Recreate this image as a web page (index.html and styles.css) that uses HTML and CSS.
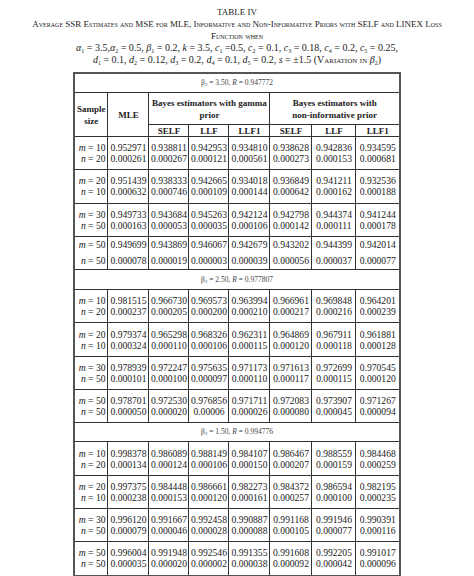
FILE: index.html
```html
<!DOCTYPE html>
<html>
<head>
<meta charset="utf-8">
<link rel="stylesheet" href="styles.css">
</head>
<body>
<div class="page">
  <div class="caption">
    <div class="cap-title">TABLE IV</div>
    <div class="cap-sc">Average SSR Estimates and MSE for MLE, Informative and Non-Informative Priors with SELF and LINEX Loss<br>Function when</div>
    <div class="cap-math"><i>α</i><sub>1</sub> = 3.5,<i>α</i><sub>2</sub> = 0.5, <i>β</i><sub>1</sub> = 0.2, <i>k</i> = 3.5, <i>c</i><sub>1</sub> =0.5, <i>c</i><sub>2</sub> = 0.1, <i>c</i><sub>3</sub> = 0.18, <i>c</i><sub>4</sub> = 0.2, <i>c</i><sub>5</sub> = 0.25,</div>
    <div class="cap-math"><i>d</i><sub>1</sub> = 0.1, <i>d</i><sub>2</sub> = 0.12, <i>d</i><sub>3</sub> = 0.2, <i>d</i><sub>4</sub> = 0.1, <i>d</i><sub>5</sub> = 0.2, <i>s</i> = ±1.5 <span class="sc">(Variation in</span> <i>β</i><sub>2</sub>)</div>
  </div>
  <table class="data">
    <colgroup>
      <col class="w34"><col class="w41"><col class="w40"><col class="w40"><col class="w41"><col class="w42"><col class="w44"><col class="w44">
    </colgroup>
    <tr class="beta-row"><td colspan="8"><span class="bsym">β<sub>2</sub></span> = 3.50, <i>R</i> = 0.947772</td></tr>
    <tr class="head1">
      <th rowspan="2" class="h-sample">Sample<br>size</th>
      <th rowspan="2">MLE</th>
      <th colspan="3">Bayes estimators with gamma<br>prior</th>
      <th colspan="3">Bayes estimators with<br>non-informative prior</th>
    </tr>
    <tr class="head2"><th>SELF</th><th>LLF</th><th>LLF1</th><th>SELF</th><th>LLF</th><th>LLF1</th></tr>

    <tr class="grp"><td class="lbl"><i>m</i> = 10<br><i>n</i> = 20</td><td>0.952971<br>0.000261</td><td>0.938811<br>0.000267</td><td>0.942953<br>0.000121</td><td>0.934810<br>0.000561</td><td>0.938628<br>0.000273</td><td>0.942836<br>0.000153</td><td>0.934595<br>0.000681</td></tr>
    <tr class="grp"><td class="lbl"><i>m</i> = 20<br><i>n</i> = 10</td><td>0.951439<br>0.000632</td><td>0.938333<br>0.000746</td><td>0.942665<br>0.000109</td><td>0.934018<br>0.000144</td><td>0.936849<br>0.000642</td><td>0.941211<br>0.000162</td><td>0.932536<br>0.000188</td></tr>
    <tr class="grp"><td class="lbl"><i>m</i> = 30<br><i>n</i> = 50</td><td>0.949733<br>0.000163</td><td>0.943684<br>0.000053</td><td>0.945263<br>0.000035</td><td>0.942124<br>0.000106</td><td>0.942798<br>0.000142</td><td>0.944374<br>0.000111</td><td>0.941244<br>0.000178</td></tr>
    <tr class="grp wide"><td class="lbl"><i>m</i> = 50<br><i>n</i> = 50</td><td>0.949699<br>0.000078</td><td>0.943869<br>0.000019</td><td>0.946067<br>0.000003</td><td>0.942679<br>0.000039</td><td>0.943202<br>0.000056</td><td>0.944399<br>0.000037</td><td>0.942014<br>0.000077</td></tr>

    <tr class="beta-row b2"><td colspan="8"><span class="bsym">β<sub>2</sub></span> = 2.50, <i>R</i> = 0.977807</td></tr>
    <tr class="grp"><td class="lbl"><i>m</i> = 10<br><i>n</i> = 20</td><td>0.981515<br>0.000237</td><td>0.966730<br>0.000205</td><td>0.969573<br>0.000200</td><td>0.963994<br>0.000210</td><td>0.966961<br>0.000217</td><td>0.969848<br>0.000216</td><td>0.964201<br>0.000239</td></tr>
    <tr class="grp"><td class="lbl"><i>m</i> = 20<br><i>n</i> = 10</td><td>0.979374<br>0.000324</td><td>0.965298<br>0.000110</td><td>0.968326<br>0.000106</td><td>0.962311<br>0.000115</td><td>0.964869<br>0.000120</td><td>0.967911<br>0.000118</td><td>0.961881<br>0.000128</td></tr>
    <tr class="grp"><td class="lbl"><i>m</i> = 30<br><i>n</i> = 50</td><td>0.978939<br>0.000101</td><td>0.972247<br>0.000100</td><td>0.975635<br>0.000097</td><td>0.971173<br>0.000110</td><td>0.971613<br>0.000117</td><td>0.972699<br>0.000115</td><td>0.970545<br>0.000120</td></tr>
    <tr class="grp"><td class="lbl"><i>m</i> = 50<br><i>n</i> = 50</td><td>0.978701<br>0.000050</td><td>0.972530<br>0.000020</td><td>0.976856<br>0.00006</td><td>0.971711<br>0.000026</td><td>0.972083<br>0.000080</td><td>0.973907<br>0.000045</td><td>0.971267<br>0.000094</td></tr>

    <tr class="beta-row"><td colspan="8"><span class="bsym">β<sub>2</sub></span> = 1.50, <i>R</i> = 0.994776</td></tr>
    <tr class="grp"><td class="lbl"><i>m</i> = 10<br><i>n</i> = 20</td><td>0.998378<br>0.000134</td><td>0.986089<br>0.000124</td><td>0.988149<br>0.000106</td><td>0.984107<br>0.000150</td><td>0.986467<br>0.000207</td><td>0.988559<br>0.000159</td><td>0.984468<br>0.000259</td></tr>
    <tr class="grp"><td class="lbl"><i>m</i> = 20<br><i>n</i> = 10</td><td>0.997375<br>0.000238</td><td>0.984448<br>0.000153</td><td>0.986661<br>0.000120</td><td>0.982273<br>0.000161</td><td>0.984372<br>0.000257</td><td>0.986594<br>0.000100</td><td>0.982195<br>0.000235</td></tr>
    <tr class="grp"><td class="lbl"><i>m</i> = 30<br><i>n</i> = 50</td><td>0.996120<br>0.000079</td><td>0.991667<br>0.000046</td><td>0.992458<br>0.000028</td><td>0.990887<br>0.000088</td><td>0.991168<br>0.000105</td><td>0.991946<br>0.000077</td><td>0.990391<br>0.000116</td></tr>
    <tr class="grp"><td class="lbl"><i>m</i> = 50<br><i>n</i> = 50</td><td>0.996004<br>0.000035</td><td>0.991948<br>0.000020</td><td>0.992546<br>0.000002</td><td>0.991355<br>0.000038</td><td>0.991608<br>0.000092</td><td>0.992205<br>0.000042</td><td>0.991017<br>0.000096</td></tr>
  </table>
</div>
</body>
</html>
```
FILE: styles.css
```css
html, body {
  margin: 0;
  padding: 0;
  background: #ffffff;
}
body {
  font-family: "Liberation Serif", "Times New Roman", serif;
  color: #222222;
}
.page {
  width: 474px;
  height: 576px;
  overflow: hidden;
}
.caption {
  padding-top: 6px;
  margin-bottom: 6px;
  text-align: center;
  line-height: 12px;
  font-size: 9px;
}
.cap-title {
  font-size: 9px;
}
.cap-sc {
  font-variant: small-caps;
  font-size: 9px;
}
.sc {
  font-variant: small-caps;
}
.cap-math {
  font-size: 10px;
}
.cap-math sub {
  font-size: 6px;
  vertical-align: -2px;
  line-height: 0;
}
table.data {
  border-collapse: collapse;
  table-layout: fixed;
  width: 326px;
  margin: 0 auto;
  border: 2px solid #555555;
}
col.w34 { width: 34px; }
col.w40 { width: 40px; }
col.w41 { width: 41px; }
col.w42 { width: 42px; }
col.w44 { width: 44px; }
td, th {
  border: 1px solid #333333;
  padding: 0;
  text-align: center;
  vertical-align: middle;
}
.beta-row td {
  height: 18px;
  font-size: 7.5px;
  color: #444444;
  line-height: 10px;
}
.beta-row.b2 td {
  height: 19px;
}
.bsym sub {
  font-size: 5px;
  vertical-align: -1px;
  line-height: 0;
}
.head1 th {
  height: 31px;
  font-size: 9px;
  font-weight: bold;
  line-height: 12px;
}
.head2 th {
  height: 11px;
  font-size: 9px;
  font-weight: bold;
  line-height: 10px;
}
.grp td {
  height: 32.3px;
  font-size: 9.6px;
  line-height: 11px;
}
.grp.wide td {
  line-height: 16px;
}
.grp td.lbl {
  text-align: right;
  padding-right: 2px;
}
```
